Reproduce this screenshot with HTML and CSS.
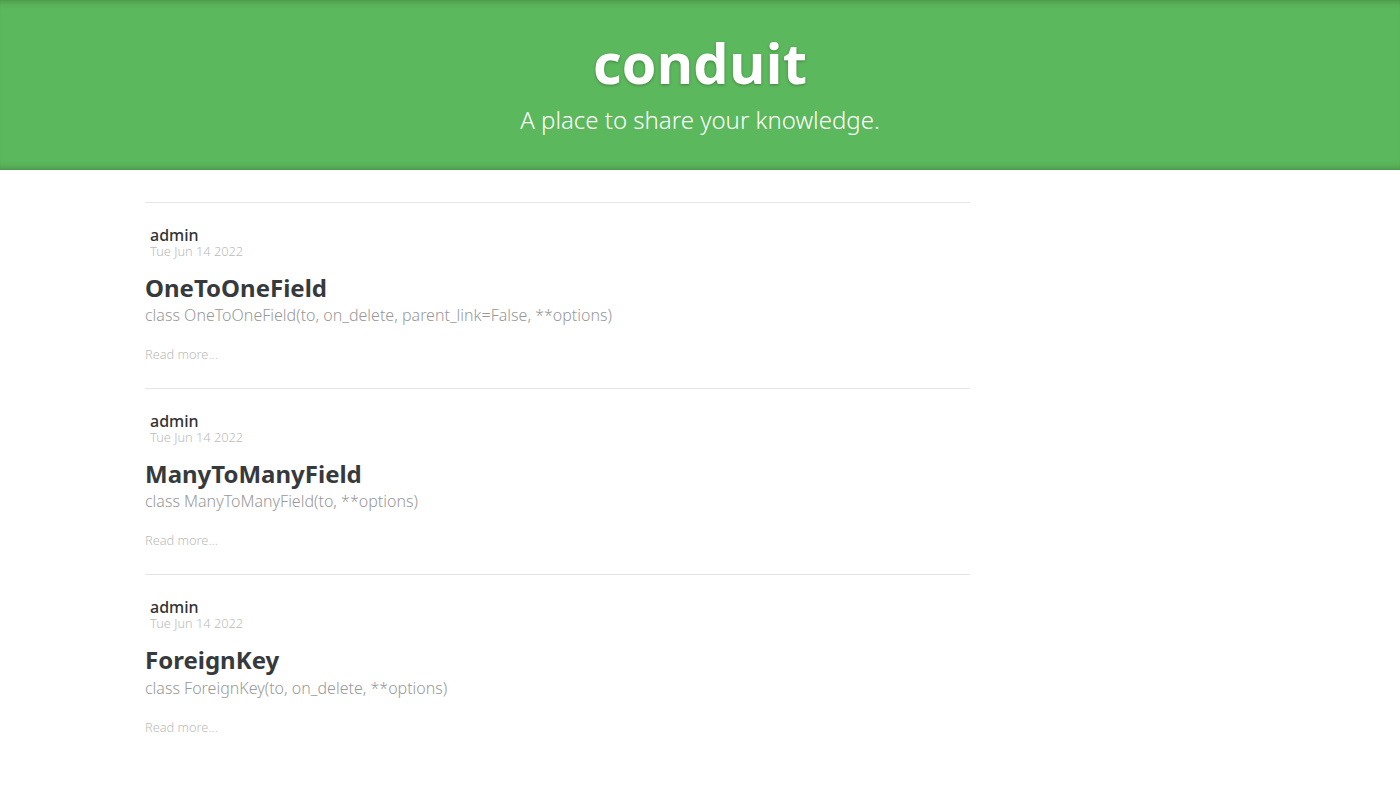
FILE: index.html
```html
<!DOCTYPE html>
<html lang="en">
<head>
<meta charset="utf-8">
<title>Conduit</title>
<link rel="stylesheet" href="styles.css">
</head>
<body>
<div class="home-page">
  <div class="banner">
    <h1 class="logo-font">conduit</h1>
    <p class="tagline">A place to share your knowledge.</p>
  </div>
  <div class="container">
    <div class="feed">
      <div class="article-preview">
        <div class="article-meta">
          <a class="author" href="#">admin</a>
          <span class="date">Tue Jun 14 2022</span>
        </div>
        <a class="preview-link" href="#">
          <h1 class="title">OneToOneField</h1>
          <p class="desc">class OneToOneField(to, on_delete, parent_link=False, **options)</p>
          <span class="read-more">Read more...</span>
        </a>
      </div>
      <div class="article-preview">
        <div class="article-meta">
          <a class="author" href="#">admin</a>
          <span class="date">Tue Jun 14 2022</span>
        </div>
        <a class="preview-link" href="#">
          <h1 class="title">ManyToManyField</h1>
          <p class="desc">class ManyToManyField(to, **options)</p>
          <span class="read-more">Read more...</span>
        </a>
      </div>
      <div class="article-preview">
        <div class="article-meta">
          <a class="author" href="#">admin</a>
          <span class="date">Tue Jun 14 2022</span>
        </div>
        <a class="preview-link" href="#">
          <h1 class="title">ForeignKey</h1>
          <p class="desc">class ForeignKey(to, on_delete, **options)</p>
          <span class="read-more">Read more...</span>
        </a>
      </div>
    </div>
  </div>
</div>
</body>
</html>
```

FILE: styles.css
```css
* { box-sizing: border-box; }
html, body { margin: 0; padding: 0; }
body {
  font-family: "Noto Sans", "Open Sans", sans-serif;
  font-size: 16px;
  line-height: 1.5;
  color: #373a3c;
  background: #fff;
}
a { text-decoration: none; color: inherit; }

.banner {
  background: #5cb85c;
  color: #fff;
  padding: 32px;
  text-align: center;
  box-shadow: inset 0 8px 8px -8px rgba(0,0,0,.3), inset 0 -8px 8px -8px rgba(0,0,0,.3);
  margin-bottom: 32px;
}
.logo-font {
  margin: 0 0 8px;
  font-family: "Open Sans", sans-serif;
  font-weight: 700;
  font-size: 56px;
  line-height: 1.1;
  text-shadow: 0 1px 3px rgba(0,0,0,.3);
}
.tagline {
  margin: 0;
  font-size: 24px;
  font-weight: 300;
  line-height: 1.5;
}

.container {
  width: 1140px;
  margin: 0 auto;
  padding: 0 15px;
}
.feed {
  width: 825px;
}
.article-preview {
  border-top: 1px solid rgba(0,0,0,.1);
  padding: 24px 0 24px;
}
.article-meta {
  display: flex;
  flex-direction: column;
  align-items: flex-start;
  margin: 0 0 16px 5px;
  line-height: 16px;
}
.author {
  color: #333;
  font-weight: 500;
  font-size: 16px;
}
.date {
  color: #bbb;
  font-size: 12.8px;
  font-weight: 300;
}
.preview-link {
  display: block;
}
.title {
  margin: 0 0 2px;
  font-size: 24px;
  font-weight: 700;
  line-height: 1.1;
  color: #373a3c;
}
.desc {
  margin: 0 0 18px;
  font-weight: 300;
  color: #999;
  font-size: 16px;
  line-height: 24px;
}
.read-more {
  display: block;
  font-size: 12.8px;
  font-weight: 300;
  color: #bbb;
  line-height: 19px;
}
```
